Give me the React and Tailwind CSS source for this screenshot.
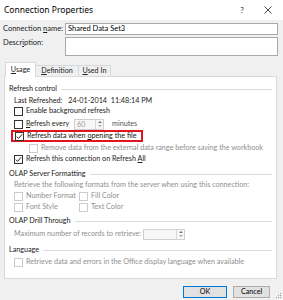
import React from 'react';

const Box = ({ checked, disabled }) => (
  <span
    className={`w-[9px] h-[9px] border bg-white flex items-center justify-center shrink-0 ${
      disabled ? 'border-[#cccccc]' : 'border-[#333333]'
    }`}
  >
    {checked && (
      <svg width="7" height="7" viewBox="0 0 7 7">
        <path d="M0.8 3.6 L2.6 5.4 L6.2 1.2" fill="none" stroke="#222" strokeWidth="1" />
      </svg>
    )}
  </span>
);

const Check = ({ children, checked, disabled, className = '' }) => (
  <div className={`flex items-center gap-[3px] h-[10px] shrink-0 ${className}`}>
    <Box checked={checked} disabled={disabled} />
    <span className={disabled ? 'text-[#8f8f8f]' : 'text-[#222]'}>{children}</span>
  </div>
);

const Group = ({ title, className = '' }) => (
  <div className={`flex items-center gap-[4px] h-[10px] pl-[4px] pr-[4px] ${className}`}>
    <span className="text-[#1a1a1a]">{title}</span>
    <div className="flex-1 h-px bg-[#dcdcdc]" />
  </div>
);

const Spin = ({ value, className = '' }) => (
  <div className={`flex h-[11px] shrink-0 border border-[#d0d0d0] bg-[#f7f7f7] ${className}`}>
    <span className="flex-1 pl-[2px] leading-[9px] text-[#9a9a9a]">{value}</span>
    <div className="w-[8px] flex flex-col border-l border-[#d8d8d8]">
      <span className="flex-1 flex items-center justify-center">
        <svg width="4" height="2" viewBox="0 0 4 2"><path d="M0 2 L2 0 L4 2Z" fill="#777" /></svg>
      </span>
      <span className="flex-1 flex items-center justify-center">
        <svg width="4" height="2" viewBox="0 0 4 2"><path d="M0 0 L2 2 L4 0Z" fill="#aaa" /></svg>
      </span>
    </div>
  </div>
);

export default function App() {
  return (
    <div className="w-[283px] h-[300px] bg-[#f0f0f0] relative overflow-hidden font-['Lato','Noto_Sans',sans-serif] text-[7.2px] leading-none text-[#222] whitespace-nowrap">
      {/* Title bar */}
      <div className="h-[20px] bg-white flex items-center pl-[4px]">
        <span className="text-[8.5px] text-black flex-1 font-['Noto_Sans',sans-serif]">Connection Properties</span>
        <span className="text-[8px] text-[#333] w-[10px] mr-[17px] text-center">?</span>
        <svg width="8" height="8" viewBox="0 0 8 8" className="mr-[11px]">
          <path d="M0.5 0.5 L7.5 7.5 M7.5 0.5 L0.5 7.5" stroke="#333" strokeWidth="0.9" />
        </svg>
      </div>

      {/* Connection fields */}
      <div className="pl-[3px] pr-[5px] pt-[3px]">
        <div className="flex items-center h-[12px]">
          <span className="w-[62px] text-[7.5px]">
            Connection <span className="underline">n</span>ame:
          </span>
          <div className="flex-1 h-[12px] border border-[#a9a9a9] bg-white flex items-center pl-[2px] text-black text-[7.5px]">
            Shared Data Set3
          </div>
        </div>
        <div className="flex mt-[2px]">
          <span className="w-[62px] pt-[2px] text-[7.5px]">
            Descr<span className="underline">i</span>ption:
          </span>
          <div className="flex-1 h-[19px] border border-[#a9a9a9] bg-white" />
        </div>
      </div>

      {/* Tabs */}
      <div className="pl-[5px] mt-[6px] flex items-end h-[15px] relative z-10">
        <div className="w-[31px] h-[15px] bg-white border border-b-0 border-[#d9d9d9] flex items-center justify-center">
          <span><span className="underline">U</span>sage</span>
        </div>
        <div className="w-[43px] h-[12px] border border-l-0 border-[#d9d9d9] flex items-center justify-center">
          <span><span className="underline">D</span>efinition</span>
        </div>
        <div className="w-[32px] h-[12px] border border-l-0 border-[#d9d9d9] flex items-center justify-center">
          <span><span className="underline">U</span>sed In</span>
        </div>
      </div>

      {/* Panel */}
      <div className="ml-[4px] -mt-px w-[273px] h-[203px] bg-white border border-[#d9d9d9] pt-[7px]">
        <Group title="Refresh control" />
        <div className="flex items-center h-[10px] mt-[2px] pl-[9px] gap-[6px]">
          <span>Last Refreshed:</span>
          <span>24-01-2014&nbsp;&nbsp;11:48:14 PM</span>
        </div>
        <div className="pl-[9px]">
          <Check>Enable background refresh</Check>
          <div className="flex items-center h-[10px] mt-[3px]">
            <Box />
            <span className="ml-[3px] w-[48px] shrink-0">
              <span className="underline">R</span>efresh every
            </span>
            <Spin value="60" className="w-[30px]" />
            <span className="ml-[8px] text-[#555]">minutes</span>
          </div>
        </div>
        <div className="ml-[6px] mt-[1px] w-[132px] h-[12px] border-2 border-[#e0151f] flex items-center pl-[2px] gap-[3px]">
          <Box checked />
          <span className="text-[#111]">
            Refresh data when <span className="underline">o</span>pening the file
          </span>
        </div>
        <div className="pl-[24px]">
          <Check disabled className="mt-[1px]">
            Remove data from the external data range before saving the workbook
          </Check>
        </div>
        <div className="pl-[9px]">
          <Check checked className="mt-[1px]">
            Refresh this connection on Refresh <span className="underline">A</span>ll
          </Check>
        </div>
        <Group title="OLAP Server Formatting" className="mt-[5px]" />
        <div className="pl-[9px]">
          <div className="h-[10px] flex items-center mt-[1px] text-[#8f8f8f]">
            Retrieve the following formats from the server when using this connection:
          </div>
          <div className="flex mt-[1px]">
            <Check disabled className="w-[65px]">Number Format</Check>
            <Check disabled>Fill Color</Check>
          </div>
          <div className="flex mt-[1px]">
            <Check disabled className="w-[65px]">Font Style</Check>
            <Check disabled>Text Color</Check>
          </div>
        </div>
        <Group title="OLAP Drill Through" className="mt-[4px]" />
        <div className="pl-[9px] flex items-center h-[10px] mt-[3px]">
          <span className="w-[129px] shrink-0 text-[#8f8f8f]">Maximum number of records to retrieve:</span>
          <Spin value="" className="w-[42px]" />
        </div>
        <Group title="Language" className="mt-[6px]" />
        <div className="pl-[9px]">
          <Check disabled className="mt-[2px]">
            Retrieve data and errors in the Office display language when available
          </Check>
        </div>
      </div>

      {/* Buttons */}
      <div className="flex mt-[7px] pl-[183px] gap-[6px]">
        <div className="w-[44px] h-[12px] bg-[#e1e1e1] border border-[#0078d7] flex items-center justify-center text-black">
          OK
        </div>
        <div className="w-[37px] h-[12px] bg-[#e1e1e1] border border-[#adadad] flex items-center justify-center text-black">
          Cancel
        </div>
      </div>

      {/* Resize grip */}
      <svg width="6" height="6" viewBox="0 0 6 6" className="absolute right-[1px] bottom-[1px]">
        <rect x="4" y="0" width="1" height="1" fill="#999" />
        <rect x="2" y="2" width="1" height="1" fill="#999" />
        <rect x="4" y="2" width="1" height="1" fill="#999" />
        <rect x="0" y="4" width="1" height="1" fill="#999" />
        <rect x="2" y="4" width="1" height="1" fill="#999" />
        <rect x="4" y="4" width="1" height="1" fill="#999" />
      </svg>
    </div>
  );
}
